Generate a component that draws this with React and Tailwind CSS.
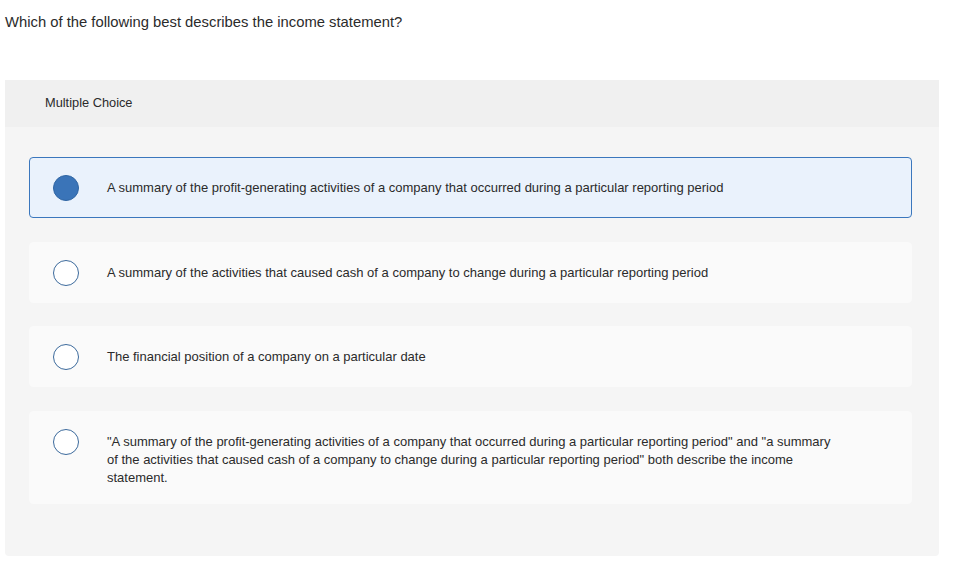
import React, { useState } from 'react';

const options = [
  'A summary of the profit-generating activities of a company that occurred during a particular reporting period',
  'A summary of the activities that caused cash of a company to change during a particular reporting period',
  'The financial position of a company on a particular date',
  '"A summary of the profit-generating activities of a company that occurred during a particular reporting period" and "a summary of the activities that caused cash of a company to change during a particular reporting period" both describe the income statement.',
];

const App = () => {
  const [selected, setSelected] = useState(0);

  return (
    <div className="min-h-screen bg-white text-[#2b2b2b]" style={{ fontFamily: '"Liberation Sans", Arial, sans-serif' }}>
      {/* Question */}
      <p className="pl-[5px] pt-[12px] text-[14.8px] leading-[20px]">
        Which of the following best describes the income statement?
      </p>

      {/* Panel */}
      <div className="ml-[5px] mt-[48px] w-[934px] rounded-sm bg-[#f5f5f5]">
        <div className="h-[47px] bg-[#f0f0f0] pl-[40px] pt-[14px] text-[12.8px] leading-[18px]">
          Multiple Choice
        </div>

        <div className="flex flex-col gap-[23.5px] pl-6 pr-[27px] pt-[30px] pb-[52px]">
          {options.map((text, i) => {
            const isSel = selected === i;
            return (
              <div
                key={i}
                onClick={() => setSelected(i)}
                className={
                  isSel
                    ? 'flex cursor-pointer items-start rounded-sm border border-[#3b77bd] bg-[#eaf2fc] pl-[23px] pt-[17px] pb-[16px]'
                    : 'flex cursor-pointer items-start rounded-sm border border-[#fafafa] bg-[#fafafa] pl-[23px] pt-[17px] pb-[16px]'
                }
              >
                <span
                  className={
                    isSel
                      ? 'h-[26px] w-[26px] shrink-0 rounded-full border-[1.5px] border-[#2f65a3] bg-[#3a74b8]'
                      : 'h-[26px] w-[26px] shrink-0 rounded-full border-[1.5px] border-[#3c6a9c] bg-white'
                  }
                />
                <span className="ml-[28px] w-[730px] pt-[4px] text-[13px] leading-[18px]">{text}</span>
              </div>
            );
          })}
        </div>
      </div>
    </div>
  );
};

export default App;
